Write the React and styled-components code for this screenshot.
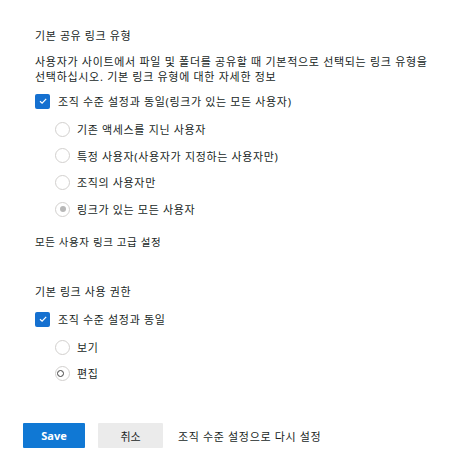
import React from 'react';
import styled, { createGlobalStyle } from 'styled-components';

const GlobalStyle = createGlobalStyle`
  html, body {
    margin: 0;
    padding: 0;
    background: #ffffff;
  }
  body {
    font-family: "Noto Sans", "Noto Sans CJK KR", sans-serif;
    color: #201f1e;
  }
`;

const Page = styled.div`
  width: 474px;
  height: 476px;
  box-sizing: border-box;
  padding-top: 28px;
  display: flex;
  flex-direction: column;
`;

const Section = styled.div`
  padding: 0 35px;
  display: flex;
  flex-direction: column;
`;

const Heading = styled.div`
  font-size: 11px;
  line-height: 16px;
  margin-top: ${p => p.$top || 0}px;
  letter-spacing: 0.6px;
`;

const Description = styled.div`
  font-size: 11px;
  line-height: 15px;
  margin-top: 10px;
  letter-spacing: 0.7px;
`;

const CheckRow = styled.div`
  display: flex;
  align-items: center;
  gap: 8px;
  height: 16px;
  margin-top: ${p => p.$top}px;
  font-size: 11px;
  letter-spacing: 0.65px;
`;

const CheckBox = styled.span`
  width: 15px;
  height: 15px;
  border-radius: 2px;
  background: #1570d0;
  display: flex;
  align-items: center;
  justify-content: center;
`;

const RadioGroup = styled.div`
  display: flex;
  flex-direction: column;
  gap: ${p => p.$gap}px;
  margin-top: 12px;
  padding-left: 20px;
`;

const RadioRow = styled.div`
  display: flex;
  align-items: center;
  gap: 7px;
  height: 16px;
  font-size: 11px;
  letter-spacing: 0.65px;
`;

const Radio = styled.span`
  width: 15px;
  height: 15px;
  box-sizing: border-box;
  border-radius: 50%;
  border: 1px solid #d2d0ce;
  position: relative;
  flex-shrink: 0;
`;

const Dot = styled.span`
  position: absolute;
  left: 3.5px;
  top: 3.5px;
  width: 6px;
  height: 6px;
  border-radius: 50%;
  background: #b8b8b8;
`;

const Ring = styled.span`
  position: absolute;
  left: 1px;
  top: 3px;
  width: 7px;
  height: 7px;
  box-sizing: border-box;
  border-radius: 50%;
  border: 1.3px solid #444;
`;

const Advanced = styled.div`
  font-size: 10.5px;
  line-height: 16px;
  margin-top: 17px;
  letter-spacing: 0.6px;
`;

const Footer = styled.div`
  display: flex;
  align-items: center;
  padding: 0 23px;
  margin-top: 42px;
`;

const Button = styled.button`
  height: 25px;
  width: ${p => p.$width}px;
  border: none;
  border-radius: 1px;
  padding: 0;
  font-family: "Noto Sans", "Noto Sans CJK KR", sans-serif;
  font-size: 11px;
  font-weight: ${p => (p.$primary ? 700 : 400)};
  background: ${p => (p.$primary ? '#1078d4' : '#ebebeb')};
  color: ${p => (p.$primary ? '#ffffff' : '#201f1e')};
  margin-right: ${p => p.$gap}px;
`;

const ResetText = styled.span`
  font-size: 11px;
  letter-spacing: 0.65px;
`;

const Check = () => (
  <CheckBox>
    <svg width="10" height="10" viewBox="0 0 10 10">
      <path d="M2 5.2 L4.1 7.2 L8.2 2.8" fill="none" stroke="#fff" strokeWidth="1.2" />
    </svg>
  </CheckBox>
);

export default function App() {
  return (
    <>
      <GlobalStyle />
      <Page>
        <Section>
          <Heading>기본 공유 링크 유형</Heading>
          <Description>
            사용자가 사이트에서 파일 및 폴더를 공유할 때 기본적으로 선택되는 링크 유형을
            <br />
            선택하십시오. 기본 링크 유형에 대한 자세한 정보
          </Description>
          <CheckRow $top={9}>
            <Check />
            조직 수준 설정과 동일(링크가 있는 모든 사용자)
          </CheckRow>
          <RadioGroup $gap={10.7}>
            <RadioRow><Radio />기존 액세스를 지닌 사용자</RadioRow>
            <RadioRow><Radio />특정 사용자(사용자가 지정하는 사용자만)</RadioRow>
            <RadioRow><Radio />조직의 사용자만</RadioRow>
            <RadioRow><Radio><Dot /></Radio>링크가 있는 모든 사용자</RadioRow>
          </RadioGroup>
          <Advanced>모든 사용자 링크 고급 설정</Advanced>

          <Heading $top={34}>기본 링크 사용 권한</Heading>
          <CheckRow $top={11}>
            <Check />
            조직 수준 설정과 동일
          </CheckRow>
          <RadioGroup $gap={10}>
            <RadioRow><Radio />보기</RadioRow>
            <RadioRow><Radio><Ring /></Radio>편집</RadioRow>
          </RadioGroup>
        </Section>
        <Footer>
          <Button $primary $width={62} $gap={13}>Save</Button>
          <Button $width={65} $gap={15}>취소</Button>
          <ResetText>조직 수준 설정으로 다시 설정</ResetText>
        </Footer>
      </Page>
    </>
  );
}
